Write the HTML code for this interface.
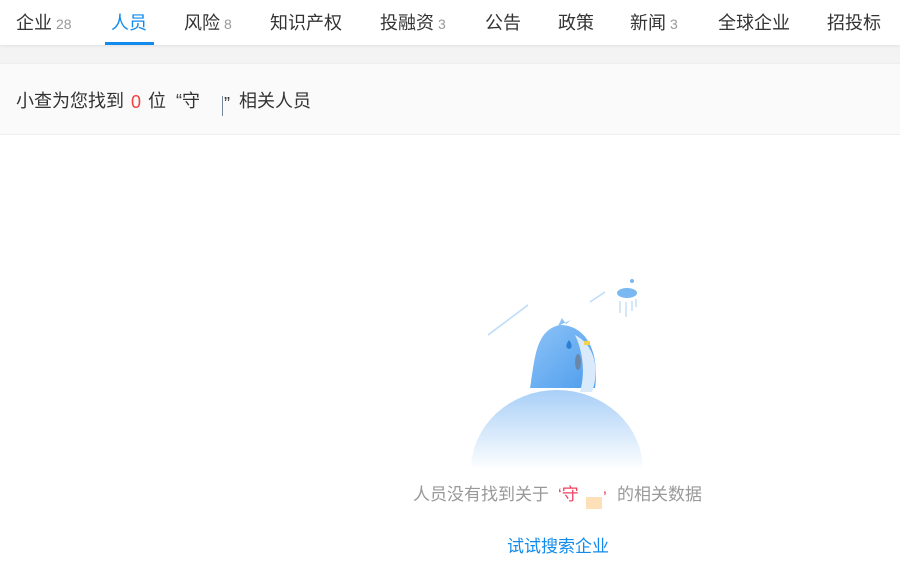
<!DOCTYPE html>
<html><head><meta charset="utf-8"><style>
*{margin:0;padding:0;box-sizing:border-box}
body{width:900px;height:570px;background:#fff;font-family:"Liberation Sans","Noto Sans CJK SC",sans-serif;position:relative;overflow:hidden;color:#333}
.nav{position:absolute;left:0;top:0;width:900px;height:45px;background:#fff;box-shadow:0 1px 3px rgba(0,0,0,.08);z-index:2}
.nav span{position:absolute;top:9px;font-size:18px;color:#333;white-space:nowrap}
.nav i{font-style:normal;font-size:14px;color:#999;margin-left:4px}
.nav .on{color:#128bed}
.ul{position:absolute;left:105px;top:42px;width:49px;height:3px;background:#128bed}
.band{position:absolute;left:0;top:45px;width:900px;height:19px;background:#f3f3f3}
.hd{position:absolute;left:0;top:63px;width:900px;height:72px;background:#fafafa;border-top:1px solid #eee;border-bottom:1px solid #eee}
.hd span{position:absolute;top:24px;font-size:18px;line-height:26px;color:#333;white-space:nowrap}
.msg span{position:absolute;top:483px;font-size:17px;line-height:24px;color:#999;white-space:nowrap}
.lnk{position:absolute;left:507px;top:532px;font-size:17px;color:#128bed}
</style></head><body>
<div class="nav">
<span style="left:16px">企业<i>28</i></span>
<span class="on" style="left:111px">人员</span>
<span style="left:184px">风险<i>8</i></span>
<span style="left:270px">知识产权</span>
<span style="left:380px">投融资<i>3</i></span>
<span style="left:485px">公告</span>
<span style="left:558px">政策</span>
<span style="left:630px">新闻<i>3</i></span>
<span style="left:718px">全球企业</span>
<span style="left:827px">招投标</span>
<div class="ul"></div>
</div>
<div class="band"></div>
<div class="hd">
<span style="left:16px">小查为您找到</span>
<span style="left:131px;top:25px;color:#f04040">0</span>
<span style="left:148px">位</span>
<span style="left:176px">“守</span>
<span style="left:222px;top:32px;width:1px;height:20px;background:#789"></span>
<span style="left:224px;top:27px">”</span>
<span style="left:239px">相关人员</span>
</div>
<svg style="position:absolute;left:460px;top:270px" width="200" height="205" viewBox="460 270 200 205">
<defs>
<linearGradient id="h" x1="0" y1="0" x2="0" y2="1"><stop offset="0" stop-color="#a9cff7"/><stop offset="1" stop-color="#fff"/></linearGradient>
<linearGradient id="b" x1="0" y1="0" x2="1" y2="1"><stop offset="0" stop-color="#8ec3f7"/><stop offset="1" stop-color="#4d9ded"/></linearGradient>
</defs>
<path d="M471 470 A86 80 0 0 1 643 470 Z" fill="url(#h)"/>
<line x1="488" y1="335" x2="528" y2="305" stroke="#bcdcf8" stroke-width="1.5"/>
<line x1="590" y1="302" x2="605" y2="292" stroke="#bcdcf8" stroke-width="1.5"/>
<ellipse cx="627" cy="293" rx="10" ry="5" fill="#7ab8f2"/>
<circle cx="632" cy="281" r="2" fill="#7ab8f2"/>
<path d="M620 301v12M626 302v15M632 301v10M636 299v8" stroke="#bcdcf8" stroke-width="1.3"/>
<path d="M530 388 C535 360 535 330 560 325 C585 325 600 350 595 388 Z" fill="url(#b)"/>
<path d="M575 335 C595 345 600 370 592 392 L580 392 C586 370 582 350 575 335Z" fill="#d9ebfb"/>
<path d="M558 326 l4-8 l4 6 l5-4 z" fill="#8ec3f7"/>
<path d="M569 340 c3 4 4 8 0 9 c-4-1-3-5 0-9z" fill="#2d7fd6"/>
<rect x="584" y="341" width="6" height="4" fill="#f5d24a"/>
<ellipse cx="578" cy="362" rx="3" ry="8" fill="#6b87a8"/>
</svg>
<div class="msg">
<span style="left:413px">人员没有找到关于</span>
<span style="left:558px;color:#f04060">‘守</span>
<span style="left:586px;top:497px;width:16px;height:12px;background:#fde0b8"></span>
<span style="left:603px;top:486px;color:#f04060">’</span>
<span style="left:617px">的相关数据</span>
</div>
<div class="lnk">试试搜索企业</div>
</body></html>
